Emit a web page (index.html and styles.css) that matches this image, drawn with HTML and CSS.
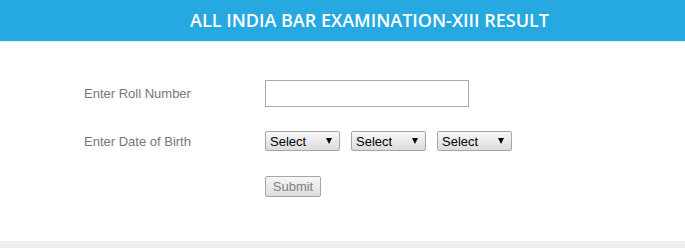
FILE: index.html
```html
<!DOCTYPE html>
<html>
<head>
<meta charset="utf-8">
<link rel="stylesheet" href="styles.css">
</head>
<body>
<header class="top">ALL INDIA BAR EXAMINATION-XIII RESULT</header>
<main class="content">
  <form class="form">
    <div class="row row-roll">
      <label class="label">Enter Roll Number</label>
      <input class="text-input" type="text">
    </div>
    <div class="row row-dob">
      <label class="label">Enter Date of Birth</label>
      <div class="selects">
        <span class="sel"><select><option>Select</option></select></span>
        <span class="sel"><select><option>Select</option></select></span>
        <span class="sel"><select><option>Select</option></select></span>
      </div>
    </div>
    <div class="row row-submit">
      <span class="label"></span>
      <button class="submit" type="button">Submit</button>
    </div>
  </form>
</main>
<footer class="bottom"></footer>
</body>
</html>
```
FILE: styles.css
```css
html, body {
  margin: 0;
  padding: 0;
  background: #ffffff;
}
body {
  font-family: "Liberation Sans", Arial, sans-serif;
  font-size: 13px;
  width: 685px;
  height: 248px;
  overflow: hidden;
}
.top {
  height: 41px;
  line-height: 41px;
  background: #25a9e0;
  color: #ffffff;
  font-family: "Open Sans", sans-serif;
  font-weight: 600;
  font-size: 18px;
  text-align: center;
  padding-left: 54px;
  border-bottom: 1px solid #e8e8e8;
}
.content {
  height: 199px;
  box-sizing: border-box;
  padding: 38px 0 0 84px;
}
.form {
  display: flex;
  flex-direction: column;
}
.row {
  display: flex;
  align-items: center;
}
.row-dob {
  margin-top: 24px;
}
.row-submit {
  margin-top: 25px;
}
.label {
  width: 181px;
  color: #777777;
  font-size: 13px;
}
.text-input {
  width: 204px;
  height: 27px;
  box-sizing: border-box;
  border: 1px solid #a9a9a9;
  margin: 0;
  padding: 0 4px;
  font: 13px "Liberation Sans", Arial, sans-serif;
  outline: none;
}
.selects {
  display: flex;
  gap: 11px;
}
.sel {
  position: relative;
  display: block;
  width: 75px;
  height: 20px;
}
.sel select {
  appearance: none;
  -webkit-appearance: none;
  width: 75px;
  height: 20px;
  box-sizing: border-box;
  margin: 0;
  padding: 0 0 0 4px;
  border: 1px solid #a6a6a6;
  border-radius: 2px;
  background: linear-gradient(#f7f7f7, #dcdcdc);
  color: #000;
  font: 13px "Liberation Sans", Arial, sans-serif;
  outline: none;
}
.sel::after {
  content: "";
  position: absolute;
  right: 8px;
  top: 7px;
  border-left: 3px solid transparent;
  border-right: 3px solid transparent;
  border-top: 6px solid #000;
  pointer-events: none;
}
.submit {
  width: 56px;
  height: 21px;
  box-sizing: border-box;
  margin: 0;
  padding: 0;
  border: 1px solid #a6a6a6;
  border-radius: 2px;
  background: linear-gradient(#f7f7f7, #dcdcdc);
  color: #808080;
  font: 13px "Liberation Sans", Arial, sans-serif;
}
.bottom {
  height: 7px;
  background: #eeeeee;
}
```
